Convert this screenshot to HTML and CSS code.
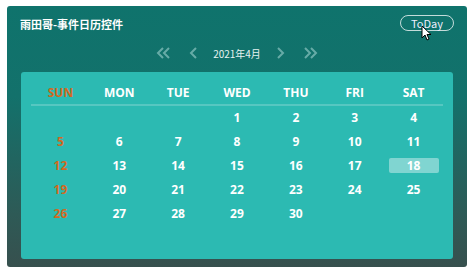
FILE: index.html
```html
<!DOCTYPE html>
<html lang="zh-CN">
<head>
    <meta charset="UTF-8">
    <title>雨田哥-事件日历控件</title>
    <link rel="stylesheet" href="styles.css">
</head>
<body>
    <div class="calendar-card">
        <div class="top-bar">
            <h1 class="title">雨田哥-事件日历控件</h1>
            <button class="today-btn">ToDay</button>
            <svg class="cursor" width="11" height="16" viewBox="0 0 11 16">
                <path d="M1 1 L1 13 L4 10 L6 15 L8 14 L6 9.5 L10 9.5 Z" fill="#fff" stroke="#000" stroke-width="1" stroke-linejoin="round"/>
            </svg>
        </div>

        <div class="nav">
            <svg class="arrow double" width="16" height="12" viewBox="0 0 16 12">
                <path d="M8 1 L3 6 L8 11 M14 1 L9 6 L14 11" fill="none" stroke="currentColor" stroke-width="2"/>
            </svg>
            <svg class="arrow" width="8" height="12" viewBox="0 0 8 12">
                <path d="M7 1 L2 6 L7 11" fill="none" stroke="currentColor" stroke-width="2"/>
            </svg>
            <span class="month">2021年4月</span>
            <svg class="arrow" width="8" height="12" viewBox="0 0 8 12">
                <path d="M1 1 L6 6 L1 11" fill="none" stroke="currentColor" stroke-width="2"/>
            </svg>
            <svg class="arrow double" width="16" height="12" viewBox="0 0 16 12">
                <path d="M2 1 L7 6 L2 11 M8 1 L13 6 L8 11" fill="none" stroke="currentColor" stroke-width="2"/>
            </svg>
        </div>

        <div class="panel">
            <div class="week-head">
                <span class="sun">SUN</span>
                <span>MON</span>
                <span>TUE</span>
                <span>WED</span>
                <span>THU</span>
                <span>FRI</span>
                <span>SAT</span>
            </div>
            <div class="days">
                <span></span><span></span><span></span>
                <span>1</span><span>2</span><span>3</span><span>4</span>

                <span class="sun">5</span><span>6</span><span>7</span>
                <span>8</span><span>9</span><span>10</span><span>11</span>

                <span class="sun">12</span><span>13</span><span>14</span>
                <span>15</span><span>16</span><span>17</span><span class="today">18</span>

                <span class="sun">19</span><span>20</span><span>21</span>
                <span>22</span><span>23</span><span>24</span><span>25</span>

                <span class="sun">26</span><span>27</span><span>28</span>
                <span>29</span><span>30</span><span></span><span></span>
            </div>
        </div>
    </div>
</body>
</html>
```

FILE: styles.css
```css
/* Page */
body {
    margin: 0;
    padding: 6px 7px;
    background: #fff;
    font-family: 'Open Sans', 'Noto Sans CJK SC', sans-serif;
}

/* Card */
.calendar-card {
    width: 460px;
    height: 261px;
    box-sizing: border-box;
    padding: 9px 14px 8px 14px;
    border-radius: 3px;
    background: linear-gradient(to bottom, #0f736c 0%, #13716b 35%, #2e5a56 80%, #37504e 100%);
    display: flex;
    flex-direction: column;
}

.top-bar {
    display: flex;
    justify-content: space-between;
    align-items: center;
    height: 16px;
    position: relative;
}

.title {
    margin: 2px 0 0 -1px;
    font-family: 'Noto Sans CJK SC', sans-serif;
    font-size: 11px;
    font-weight: bold;
    color: #fff;
}

.today-btn {
    width: 54px;
    height: 16px;
    margin-right: -1px;
    padding: 0;
    border: 1px solid rgba(255, 255, 255, 0.75);
    border-radius: 8px;
    background: transparent;
    color: #eef;
    font-family: 'Noto Sans CJK SC', sans-serif;
    font-size: 11px;
    line-height: 13px;
}

.cursor {
    position: absolute;
    right: 21px;
    top: 10px;
}

/* Month navigation */
.nav {
    display: flex;
    justify-content: center;
    align-items: center;
    gap: 16px;
    height: 22px;
    margin-top: 11px;
    margin-bottom: 8px;
}

.arrow {
    color: rgba(160, 210, 206, 0.6);
}

.arrow.double {
    margin: 0 2px;
}

.month {
    font-family: 'Noto Sans CJK SC', sans-serif;
    font-size: 10px;
    color: #e4f3f1;
}

/* Days panel */
.panel {
    flex: 1;
    background: #2cbab2;
    border-radius: 3px;
    padding: 10px 10px 0 10px;
}

.week-head,
.days {
    display: grid;
    grid-template-columns: repeat(7, 1fr);
    text-align: center;
    color: #fff;
    font-weight: bold;
    font-size: 12px;
}

.week-head {
    height: 22px;
    line-height: 22px;
    border-bottom: 2px solid rgba(255, 255, 255, 0.2);
}

.days {
    grid-auto-rows: 23.8px;
    align-items: center;
    justify-items: center;
}

.days span {
    width: 50px;
    line-height: 15px;
    border-radius: 2px;
}

.sun {
    color: #d2691e;
}

.days .today {
    background: rgba(255, 255, 255, 0.4);
}
```
